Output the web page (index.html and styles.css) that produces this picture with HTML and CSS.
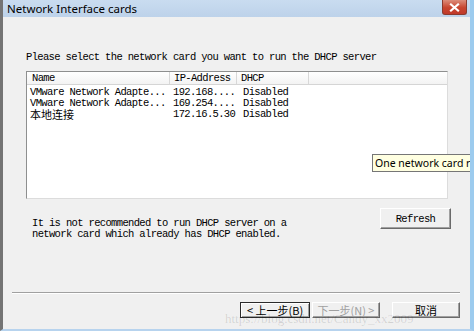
FILE: index.html
```html
<!DOCTYPE html>
<html lang="zh-CN">
<head>
    <meta charset="UTF-8">
    <meta name="viewport" content="width=device-width, initial-scale=1.0">
    <title>Network Interface cards</title>
    <link rel="stylesheet" href="styles.css">
</head>
<body>
    <div class="window">
        <div class="titlebar">
            <span class="title">Network Interface cards</span>
            <div class="close">
                <svg width="11" height="9" viewBox="0 0 11 9">
                    <path d="M2 1.5 L9 7.5 M9 1.5 L2 7.5" stroke="#fff" stroke-width="2.2" stroke-linecap="square"/>
                </svg>
            </div>
        </div>

        <div class="content">
            <p class="prompt">Please select the network card you want to run the DHCP server</p>

            <div class="listbox">
                <div class="list-head">
                    <span>Name</span>
                    <span>IP-Address</span>
                    <span>DHCP</span>
                    <span></span>
                </div>
                <div class="list-row">
                    <span>VMware Network Adapte...</span>
                    <span>192.168....</span>
                    <span>Disabled</span>
                </div>
                <div class="list-row">
                    <span>VMware Network Adapte...</span>
                    <span>169.254....</span>
                    <span>Disabled</span>
                </div>
                <div class="list-row">
                    <span class="cjk">本地连接</span>
                    <span>172.16.5.30</span>
                    <span>Disabled</span>
                </div>
            </div>

            <div class="note-row">
                <p class="note">It is not recommended to run DHCP server on a<br>network card which already has DHCP enabled.</p>
                <button class="btn btn-refresh">Refresh</button>
            </div>

            <div class="footer">
                <div class="divider"></div>
                <div class="wizard-buttons">
                    <button class="btn btn-wizard btn-default">&lt; 上一步(<u>B</u>)</button>
                    <button class="btn btn-wizard" disabled>下一步(<u>N</u>) &gt;</button>
                    <button class="btn btn-wizard btn-cancel">取消</button>
                </div>
            </div>

            <div class="tooltip">One network card r</div>
            <div class="watermark">https://blog.csdn.net/Candy_xx2009</div>
        </div>
    </div>
</body>
</html>
```

FILE: styles.css
```css
* {
    margin: 0;
    padding: 0;
    box-sizing: border-box;
}

body {
    width: 474px;
    height: 331px;
    overflow: hidden;
    background-color: #f0f0f0;
    font-family: 'Liberation Mono', monospace;
    color: #000;
}

.window {
    display: flex;
    flex-direction: column;
    height: 331px;
    border-left: 3px solid #747474;
    border-right: 4px solid #9ccbee;
    border-bottom: 2px solid #b7d3ee;
}

.titlebar {
    display: flex;
    justify-content: space-between;
    align-items: flex-start;
    height: 17px;
    background: linear-gradient(#c9dcf0, #bdd2ea);
    padding-left: 4px;
}

.title {
    font-family: 'Noto Sans', sans-serif;
    font-size: 11.5px;
    line-height: 17px;
    color: #000;
}

.close {
    display: flex;
    justify-content: center;
    align-items: center;
    width: 25px;
    height: 15px;
    margin-right: 3px;
    background: linear-gradient(#dc8c7a, #c8452f 55%, #c0392a);
    border: 1px solid #8a3a2e;
    border-top: none;
    border-radius: 0 0 3px 3px;
}

.content {
    position: relative;
    display: flex;
    flex-direction: column;
    flex: 1;
    overflow: hidden;
    background-color: #f0f0f0;
}

.prompt,
.note,
.list-head,
.list-row {
    font-size: 10.5px;
    letter-spacing: -0.65px;
    line-height: 11px;
    white-space: nowrap;
}

.prompt {
    margin: 35px 0 0 23px;
}

.listbox {
    margin: 8px 0 0 23px;
    width: 422px;
    height: 128px;
    background-color: #fff;
    border: 1px solid #8e8f8f;
    border-right-color: #dcdcdc;
    border-bottom-color: #dcdcdc;
}

.list-head,
.list-row {
    display: grid;
    grid-template-columns: 143px 67px 72px 1fr;
}

.list-head {
    height: 13px;
    line-height: 12px;
    background: linear-gradient(#ffffff, #f3f3f3);
    border-bottom: 1px solid #d5d5d5;
    margin-bottom: 2px;
}

.list-head span {
    padding-left: 4px;
    border-right: 1px solid #d8d8d8;
}

.list-head span:first-child {
    padding-left: 5px;
}

.list-head span:last-child {
    border-right: none;
}

.list-row span {
    padding-left: 3px;
}

.list-row span:nth-child(3) {
    padding-left: 6px;
}

.cjk {
    font-family: 'Noto Sans CJK SC', sans-serif;
    font-size: 11px;
    letter-spacing: 0;
}

.note-row {
    display: flex;
    align-items: flex-start;
    margin-top: 9px;
}

.note {
    margin-left: 29px;
    padding-top: 10px;
}

.btn {
    font-family: 'Liberation Mono', monospace;
    color: #000;
    background-color: #f0f0f0;
    border: 1px solid;
    border-color: #fff #6a6a6a #6a6a6a #fff;
    box-shadow: inset -1px -1px 0 #a0a0a0;
}

.btn-refresh {
    margin-left: auto;
    margin-right: 19px;
    width: 71px;
    height: 21px;
    font-size: 10.5px;
    letter-spacing: -0.65px;
}

.footer {
    margin-top: auto;
    padding-bottom: 11px;
}

.divider {
    margin: 0 10px 0 9px;
    height: 2px;
    border-top: 1px solid #a0a0a0;
    border-bottom: 1px solid #fff;
}

.wizard-buttons {
    display: flex;
    justify-content: flex-end;
    gap: 2px;
    margin: 8px 10px 0 0;
}

.btn-wizard {
    width: 68px;
    height: 16px;
    font-family: 'Noto Sans CJK SC', sans-serif;
    font-size: 11px;
    line-height: 13px;
}

.btn-wizard u {
    text-decoration: none;
}

.btn-wizard:disabled {
    color: #a0a0a0;
}

.btn-default {
    width: 70px;
    border: 1px solid #2b2b2b;
    box-shadow: inset 1px 1px 0 #fff, inset -1px -1px 0 #a0a0a0;
}

.btn-cancel {
    margin-left: 10px;
}

.tooltip {
    position: absolute;
    left: 369px;
    top: 137px;
    width: 110px;
    height: 18px;
    padding: 0 2px;
    white-space: nowrap;
    overflow: hidden;
    font-family: 'Noto Sans', sans-serif;
    font-size: 10.5px;
    line-height: 16px;
    background-color: #ffffe1;
    border: 1px solid #767676;
}

.watermark {
    position: absolute;
    left: 222px;
    top: 294px;
    white-space: nowrap;
    font-family: 'Liberation Serif', serif;
    font-size: 13px;
    color: rgba(0, 0, 0, 0.13);
    pointer-events: none;
}
```
